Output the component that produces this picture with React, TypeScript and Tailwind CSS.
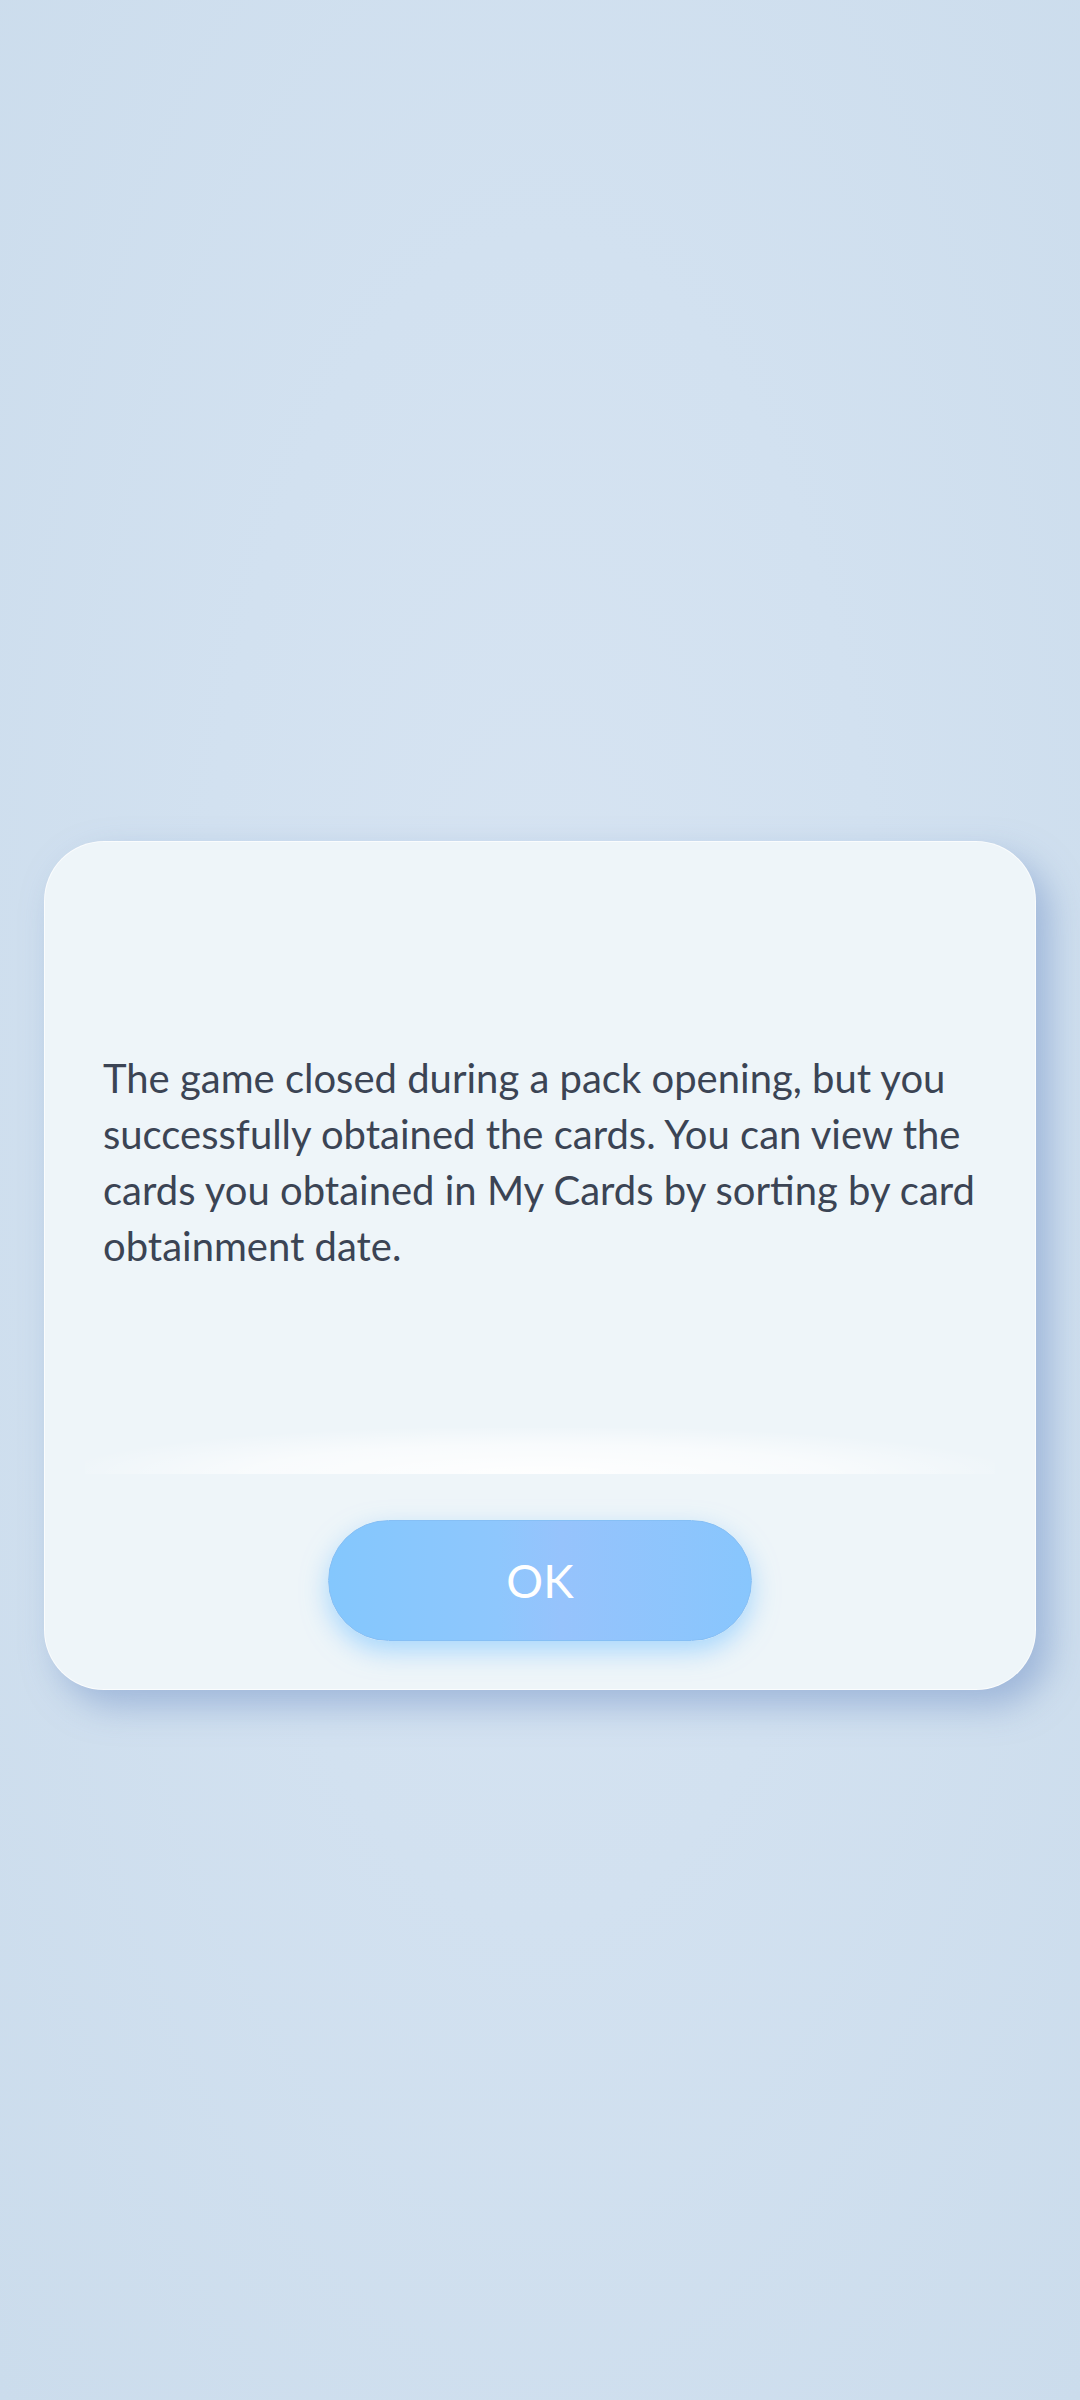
import React from 'react';

// パック開封中断の通知ダイアログ
const message = [
  'The game closed during a pack opening, but you',
  'successfully obtained the cards. You can view the',
  'cards you obtained in My Cards by sorting by card',
  'obtainment date.',
];

export default function App() {
  return (
    <div className="min-h-[2400px] w-full flex flex-col items-center pt-[841px] bg-[radial-gradient(ellipse_at_50%_45%,#d7e4f2_0%,#d2e1f0_45%,#cbdcec_100%)] font-['Lato',sans-serif]">
      <div className="w-[992px] h-[849px] rounded-[60px] bg-[#eef5f9] border border-white/70 shadow-[14px_16px_34px_rgba(118,150,200,0.55)] flex flex-col overflow-hidden">
        <div className="h-[632px] relative flex items-center px-[58px] pt-[8px]">
          <p className="text-[40px] leading-[56px] text-[#3b4454] tracking-[0px]">
            {message.map((line, i) => (
              <span key={i} className="block whitespace-nowrap">
                {line}
              </span>
            ))}
          </p>
          <div className="absolute left-[40px] right-[40px] bottom-0 h-[46px] bg-[radial-gradient(ellipse_at_50%_100%,rgba(255,255,255,0.95)_0%,rgba(255,255,255,0.6)_45%,rgba(255,255,255,0)_75%)]" />
        </div>
        <div className="flex-1 flex items-center justify-center pb-[2px]">
          <button className="w-[424px] h-[121px] rounded-full bg-[linear-gradient(90deg,#84c7fd_0%,#8ec7fd_40%,#96c3fc_55%,#88c6fd_100%)] border border-[#86bff5] shadow-[0_10px_26px_rgba(120,195,255,0.6)] text-white text-[46px] leading-none">
            OK
          </button>
        </div>
      </div>
    </div>
  );
}
